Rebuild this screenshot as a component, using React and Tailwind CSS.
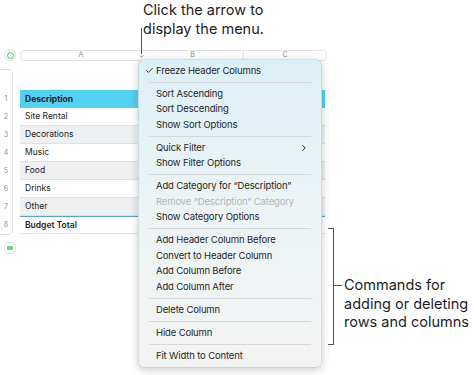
import { Check, ChevronRight, ChevronDown } from 'lucide-react'

const rows = [
  { n: 2, label: 'Site Rental', shade: false },
  { n: 3, label: 'Decorations', shade: true },
  { n: 4, label: 'Music', shade: false },
  { n: 5, label: 'Food', shade: true },
  { n: 6, label: 'Drinks', shade: false },
  { n: 7, label: 'Other', shade: true },
]

// null = separator
const menu = [
  { label: 'Freeze Header Columns', checked: true },
  null,
  { label: 'Sort Ascending' },
  { label: 'Sort Descending' },
  { label: 'Show Sort Options' },
  null,
  { label: 'Quick Filter', sub: true },
  { label: 'Show Filter Options' },
  null,
  { label: 'Add Category for \u201CDescription\u201D' },
  { label: 'Remove \u201CDescription\u201D Category', disabled: true },
  { label: 'Show Category Options' },
  null,
  { label: 'Add Header Column Before' },
  { label: 'Convert to Header Column' },
  { label: 'Add Column Before' },
  { label: 'Add Column After' },
  null,
  { label: 'Delete Column' },
  null,
  { label: 'Hide Column' },
  null,
  { label: 'Fit Width to Content' },
]

function ColumnMenu() {
  return (
    <div className="absolute left-[138px] top-[59px] w-[184px] rounded-[6px] border border-black/10 bg-gradient-to-b from-[#dcf0f7] via-[#edf4f6] to-[#f3f3f3] pt-[3px] pb-[3px] shadow-[0_2px_9px_rgba(0,0,0,0.2)]">
      {menu.map((item, i) =>
        item === null ? (
          <div key={i} className="flex h-[7.5px] items-center px-[10px]">
            <div className="h-px w-full bg-[#d6d9db]" />
          </div>
        ) : (
          <div key={i}
            className={`relative flex h-[15.5px] items-center pl-[17px] pr-[12px] text-[9.5px] tracking-[-0.15px] ${item.disabled ? 'text-[#b4b6b8]' : 'text-[#262626]'}`}>
            {item.checked && <Check size={9} strokeWidth={2.4} className="absolute left-[6px] text-[#262626]" />}
            <span className="flex-1">{item.label}</span>
            {item.sub && <ChevronRight size={10} strokeWidth={2.4} className="text-[#262626]" />}
          </div>
        )
      )}
    </div>
  )
}

export default function App() {
  return (
    <div className="relative h-[375px] w-[474px] overflow-hidden bg-white font-['Inter',sans-serif] text-[#1d1d1f]">
      {/* caption */}
      <div className="h-[48px] pl-[143px] pt-[1px] text-[14.5px] leading-[18.5px]">
        <p>Click the arrow to</p>
        <p>display the menu.</p>
      </div>

      {/* column letters */}
      <div className="flex h-[14px] items-center">
        <div className="flex w-[20px] justify-center">
          <div className="h-[12px] w-[12px] rounded-full border border-[#d8dcdf] bg-white p-[1.5px]">
            <div className="h-full w-full rounded-full border-[1.5px] border-[#4cbf6b]" />
          </div>
        </div>
        <div className="flex h-[11px] w-[307px] rounded-[4px] border border-[#e2e4e6] bg-white text-[7px] text-[#8a8d90]">
          <div className="flex w-[121px] items-center justify-center border-r border-[#e2e4e6]">A</div>
          <div className="flex w-[102px] items-center justify-center border-r border-[#e2e4e6]">B</div>
          <div className="flex flex-1 items-center justify-center">C</div>
        </div>
      </div>

      {/* sheet body */}
      <div className="mt-[7px] flex">
        <div className="w-[13px] rounded-r-[5px] border border-l-0 border-[#e2e4e6] text-[7px] text-[#8a8d90]">
          <div className="h-[20px]" />
          {[1, 2, 3, 4, 5, 6, 7, 8].map(n => (
            <div key={n} className="flex h-[18px] items-center justify-center">{n}</div>
          ))}
        </div>
        <div className="ml-[7px] w-[305px] text-[8.5px]">
          <div className="h-[21px]" />
          <div className="flex h-[18px] items-center bg-[#54d0f0] pl-[5px] font-bold text-[#10202e]">Description</div>
          {rows.map(r => (
            <div key={r.n}
              className={`flex h-[18px] items-center border-b border-[#dfe1e3] pl-[5px] text-[#222] ${r.shade ? 'bg-[#eef0f2]' : 'bg-white'}`}>
              {r.label}
            </div>
          ))}
          <div className="flex h-[18px] items-center border-t border-b border-t-[#5aa5bb] border-b-[#dfe1e3] pl-[5px] font-semibold text-[#222]">
            Budget Total
          </div>
        </div>
      </div>

      <div className="mt-[7px] flex w-[20px] justify-center">
        <div className="flex h-[12px] w-[12px] items-center justify-center rounded-full border border-[#d8dcdf] bg-white">
          <div className="h-[3.5px] w-[6px] rounded-[1px] bg-[#6fcf8e]" />
        </div>
      </div>

      {/* pointer to the arrow */}
      <div className="absolute left-[141px] top-[28px] h-[26px] w-px bg-[#555]" />
      <ChevronDown size={7} strokeWidth={2.5} className="absolute left-[137.5px] top-[53px] text-[#7a7d80]" />

      <ColumnMenu />

      {/* bracket callout */}
      <div className="absolute left-[328px] top-[228px] h-[117px] w-[6px] border-y border-r border-[#555]" />
      <div className="absolute left-[334px] top-[285px] h-px w-[8px] bg-[#555]" />
      <div className="absolute left-[344px] top-[276px] text-[14.5px] leading-[18.5px]">
        <p>Commands for</p>
        <p>adding or deleting</p>
        <p>rows and columns</p>
      </div>
    </div>
  )
}
